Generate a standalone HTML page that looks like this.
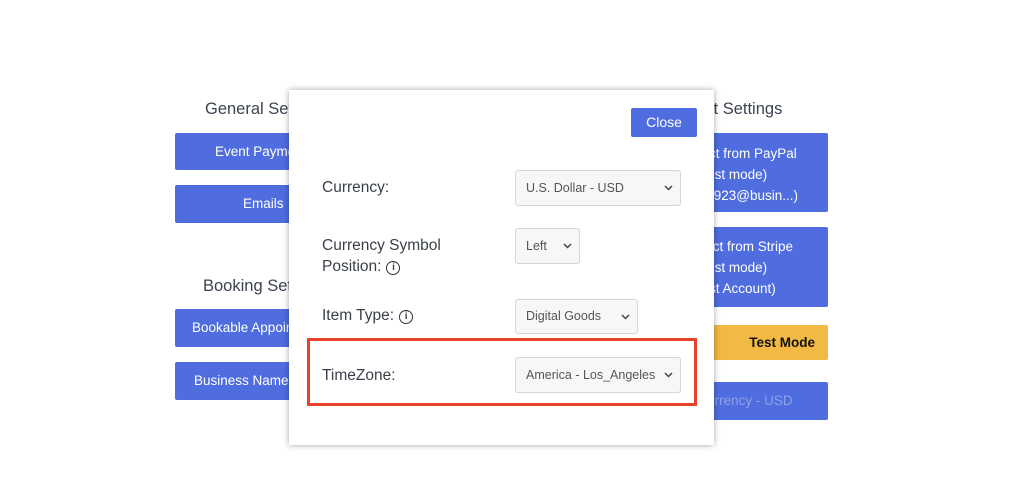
<!DOCTYPE html>
<html><head><style>
body{margin:0;width:1024px;height:484px;background:#fff;position:relative;overflow:hidden;font-family:"Liberation Sans",sans-serif;}
.a{position:absolute;}
.btn{position:absolute;background:#4f6ddf;color:#fff;border-radius:2px;font-size:13.5px;text-align:center;box-sizing:border-box;}
.h{position:absolute;color:#3c4250;font-size:16.5px;}
.lbl{position:absolute;left:322px;color:#3a3f4a;font-size:15.5px;line-height:21px;}
.sel{position:absolute;left:515px;background:#f7f7f7;border:1px solid #d6d6d6;border-radius:3px;box-sizing:border-box;font-size:12.5px;color:#555;padding-left:10px;}
.sel svg{position:absolute;right:7px;top:50%;margin-top:-3px;}
.info{display:inline-block;width:12px;height:12px;border:1.6px solid #333;border-radius:50%;font-size:10px;line-height:12px;text-align:center;font-weight:bold;vertical-align:1px;margin-left:5px;}
</style></head><body>
<div class="h" style="left:205px;top:100px">General Settings</div>
<div class="btn" style="left:175px;top:133px;width:160px;height:37px;line-height:37px;padding-left:20px;text-align:left;padding-left:40px">Event Payments</div>
<div class="btn" style="left:175px;top:185px;width:160px;height:38px;line-height:38px;text-align:left;padding-left:68px">Emails</div>
<div class="h" style="left:203px;top:277px">Booking Settings</div>
<div class="btn" style="left:175px;top:309px;width:160px;height:38px;line-height:38px;text-align:left;padding-left:17px">Bookable Appointments</div>
<div class="btn" style="left:175px;top:362px;width:160px;height:38px;line-height:38px;text-align:left;padding-left:19px">Business Name</div>

<div class="h" style="left:653px;top:100px">Payment Settings</div>
<div class="btn" style="left:600px;top:133px;width:228px;height:79px;padding-top:10px;line-height:21px;padding-left:38px">Connect from PayPal<br>(test mode)<br>(sb-886923@busin...)</div>
<div class="btn" style="left:600px;top:227px;width:228px;height:80px;padding-top:9px;line-height:21px;padding-left:38px">Connect from Stripe<br>(test mode)<br>(Test Account)</div>
<div class="btn" style="left:600px;top:325px;width:228px;height:35px;line-height:35px;background:#f2b944;color:#111;font-weight:bold;text-align:right;padding-right:13px">Test Mode</div>
<div class="btn" style="left:600px;top:382px;width:228px;height:38px;line-height:38px;color:#8fa0e8;padding-left:62px">Currency - USD</div>

<div class="a" style="left:289px;top:90px;width:425px;height:355px;background:#fff;box-shadow:0 0 6px rgba(0,0,0,.35)"></div>
<div class="btn" style="left:631px;top:108px;width:66px;height:29px;line-height:29px;font-size:14px">Close</div>

<div class="lbl" style="top:177px">Currency:</div>
<div class="sel" style="top:170px;width:166px;height:36px;line-height:34px">U.S. Dollar - USD<svg width="9" height="6"><path d="M1 1l3.5 3.5L8 1" fill="none" stroke="#444" stroke-width="1.5"/></svg></div>
<div class="lbl" style="top:235px">Currency Symbol<br>Position:<span class="info">i</span></div>
<div class="sel" style="top:228px;width:65px;height:36px;line-height:34px">Left<svg width="9" height="6"><path d="M1 1l3.5 3.5L8 1" fill="none" stroke="#444" stroke-width="1.5"/></svg></div>
<div class="lbl" style="top:305px">Item Type:<span class="info">i</span></div>
<div class="sel" style="top:299px;width:123px;height:35px;line-height:33px">Digital Goods<svg width="9" height="6"><path d="M1 1l3.5 3.5L8 1" fill="none" stroke="#444" stroke-width="1.5"/></svg></div>
<div class="a" style="left:307px;top:338px;width:390px;height:68px;border:3px solid #e8402a;box-sizing:border-box"></div>
<div class="lbl" style="top:365px">TimeZone:</div>
<div class="sel" style="top:357px;width:166px;height:36px;line-height:34px">America - Los_Angeles<svg width="9" height="6"><path d="M1 1l3.5 3.5L8 1" fill="none" stroke="#444" stroke-width="1.5"/></svg></div>
</body></html>
